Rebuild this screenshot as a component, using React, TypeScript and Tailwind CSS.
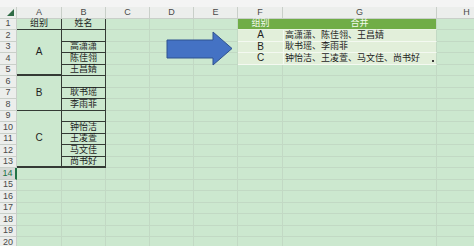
import React from "react";

const COLS = ["A", "B", "C", "D", "E", "F", "G", "H"];
const NAMES: Record<number, string> = {
  3: "高潇潇",
  4: "陈佳翎",
  5: "王昌婧",
  7: "耿书瑶",
  8: "李雨菲",
  10: "钟怡洁",
  11: "王凌萱",
  12: "马文佳",
  13: "尚书好",
};
const MERGED: Record<number, string> = {
  2: "高潇潇、陈佳翎、王昌婧",
  3: "耿书瑶、李雨菲",
  4: "钟怡洁、王凌萱、马文佳、尚书好",
};

const grid = "border-r border-b border-[#c2d9c4]";
const dark = "border-r border-b border-[#343a35] flex items-center justify-center";
const darkThick = "border-r border-b-2 border-[#343a35] flex items-center justify-center";
const rowHead =
  "border-r border-b border-[#c9cfc9] bg-[#eceeec] text-[#4a4a4a] flex items-center justify-center text-[9px]";
const rowHeadActive =
  "border-r-2 border-r-[#217346] border-b border-b-[#c9cfc9] bg-[#d6dad6] text-[#217346] flex items-center justify-center text-[9px]";
const colHead =
  "border-r border-b border-[#c9cfc9] bg-[#eceeec] text-[#4a4a4a] flex items-center justify-center text-[9px]";
const tblBody =
  "bg-[#e2efda] border-b border-[#f4f9f1] flex items-center justify-center";
const tblBodyG =
  "bg-[#e2efda] border-b border-[#f4f9f1] border-r border-r-[#c2d9c4] border-l border-l-[#f4f9f1] flex items-center pl-px relative";

function cellsForRow(r: number) {
  const out: React.ReactNode[] = [];
  out.push(
    <div key={`h${r}`} className={r === 14 ? rowHeadActive : rowHead}>
      {r}
    </div>
  );
  for (const c of COLS) {
    const k = `${c}${r}`;
    if (c === "A") {
      if (r === 1) out.push(<div key={k} className={dark}>组别</div>);
      else if (r === 2)
        out.push(<div key={k} className={`row-span-4 ${darkThick} text-[10px]`}>A</div>);
      else if (r === 6)
        out.push(<div key={k} className={`row-span-3 ${dark} text-[10px]`}>B</div>);
      else if (r === 9)
        out.push(<div key={k} className={`row-span-5 ${darkThick} text-[10px]`}>C</div>);
      else if (r <= 13) continue;
      else out.push(<div key={k} className={grid} />);
    } else if (c === "B" && r <= 13) {
      out.push(
        <div key={k} className={r === 13 ? darkThick : dark}>
          {r === 1 ? "姓名" : NAMES[r] ?? ""}
        </div>
      );
    } else if (c === "F" && r === 1) {
      out.push(
        <div key={k} className="bg-[#70ad47] text-[#f4fbef] border-b border-[#e9f3e3] flex items-center justify-center">
          组别
        </div>
      );
    } else if (c === "G" && r === 1) {
      out.push(
        <div key={k} className="bg-[#70ad47] text-[#f4fbef] border-b border-[#e9f3e3] border-r border-r-[#c2d9c4] flex items-center justify-center">
          合并
        </div>
      );
    } else if (c === "F" && r >= 2 && r <= 4) {
      out.push(
        <div key={k} className={`${tblBody} text-[10px]`}>
          {["A", "B", "C"][r - 2]}
        </div>
      );
    } else if (c === "G" && r >= 2 && r <= 4) {
      out.push(
        <div key={k} className={tblBodyG}>
          {MERGED[r]}
          {r === 4 && (
            <span className="absolute right-[2px] bottom-[2px] w-[2px] h-[2px] bg-[#3b3b3b]" />
          )}
        </div>
      );
    } else {
      out.push(<div key={k} className={grid} />);
    }
  }
  return out;
}

export default function App() {
  const rows: React.ReactNode[] = [];
  for (let r = 1; r <= 20; r++) rows.push(...cellsForRow(r));
  return (
    <div className="w-[474px] h-[246px] overflow-hidden relative bg-[#cce8cf] font-['Liberation_Sans','Noto_Sans_CJK_SC',sans-serif] text-[9px] leading-none text-[#1e1e1e]">
      <div className="grid grid-cols-[17px_45px_44px_44px_44px_44px_45px_154px_60px] grid-rows-[7px_11.5px_repeat(20,11.5px)]">
        <div className="col-span-9 bg-[#f4f4f4]" />
        <div className="border-r border-b border-[#c9cfc9] bg-[#eceeec] relative">
          <svg className="absolute right-[2px] bottom-[2px]" width="7" height="7" viewBox="0 0 7 7">
            <polygon points="7,0 7,7 0,7" fill="#2f6b45" />
          </svg>
        </div>
        {COLS.map((c) => (
          <div key={`ch${c}`} className={colHead}>
            {c}
          </div>
        ))}
        {rows}
      </div>
      <svg
        className="absolute left-[166px] top-[31px]"
        width="68"
        height="36"
        viewBox="0 0 68 36"
      >
        <polygon
          points="1,9 47,9 47,1 66,17.5 47,34 47,27 1,27"
          fill="#4472c4"
          stroke="#2f528f"
          strokeWidth="1"
        />
      </svg>
    </div>
  );
}
